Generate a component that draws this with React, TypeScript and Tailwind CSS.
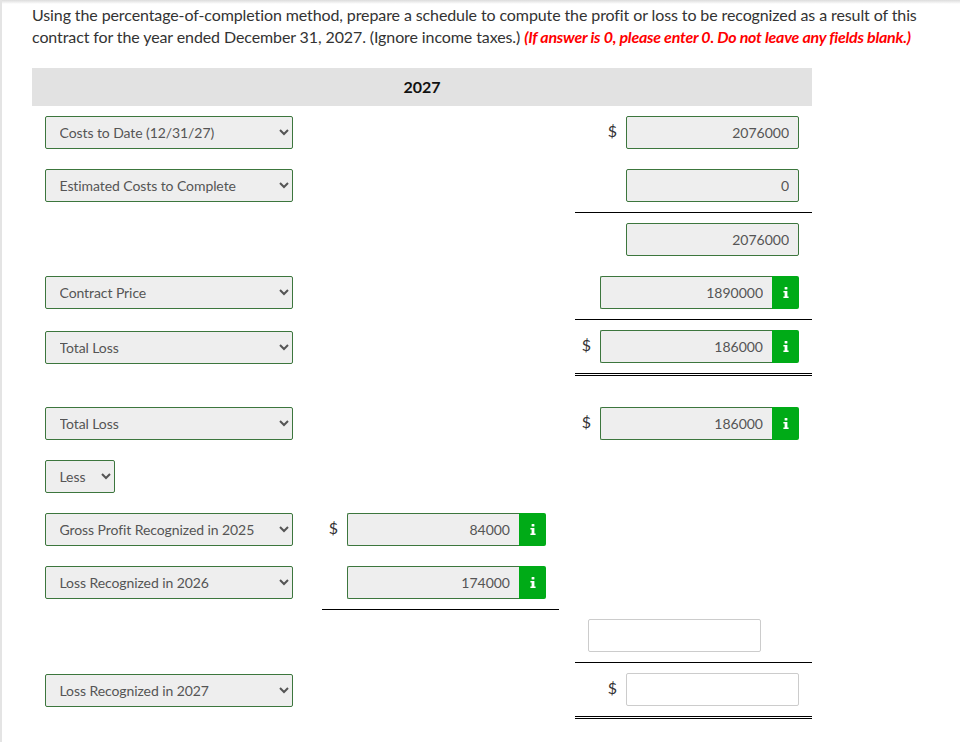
import type { ReactNode } from "react";

function InfoGlyph() {
  return (
    <svg viewBox="0 0 6 11" className="h-[11px] w-[6px]" fill="currentColor" aria-hidden="true">
      <rect x="1.6" y="0" width="2.8" height="2.6" rx="0.5" />
      <path d="M0.4 4h4v5.6H5.6V11H0.4V9.6h1.2V5.4H0.4z" />
    </svg>
  );
}

function Select({ label, width = "w-[248px]" }: { label: string; width?: string }) {
  return (
    <select
      defaultValue={label}
      className={`${width} h-[33px] rounded-[2px] border border-[#3c763d] bg-[#eeeeee] pl-[9.5px] text-[14px] tracking-[-0.08px] text-[#555555]`}
    >
      <option>{label}</option>
    </select>
  );
}

function Amount({
  value,
  dollar,
  info,
  locked = true,
}: {
  value?: string;
  dollar?: boolean;
  info?: boolean;
  locked?: boolean;
}) {
  return (
    <div className="flex items-center justify-end pr-[13px]">
      {dollar && <span className="mr-[9px] -mt-[4px] text-[16px] leading-[22px] text-[#333333]">$</span>}
      <Field value={value} info={info} locked={locked} />
    </div>
  );
}

function Field({ value, info, locked }: { value?: string; info?: boolean; locked?: boolean }) {
  return (
    <div className="flex h-[33px]">
      <input
        readOnly
        value={value ?? ""}
        className={`h-full border px-[9px] text-right text-[14px] text-[#555555] ${
          locked ? "border-[#3c763d] bg-[#eeeeee]" : "border-[#cccccc] bg-white"
        } ${info ? "w-[172px] rounded-l-[2px] border-r-0" : "w-[173px] rounded-[2px]"}`}
      />
      {info && (
        <span className="flex h-full w-[27px] items-center justify-center rounded-r-[2px] bg-[#00ab17] text-white">
          <InfoGlyph />
        </span>
      )}
    </div>
  );
}

function Row({ label, mid, right }: { label?: ReactNode; mid?: ReactNode; right?: ReactNode }) {
  return (
    <div className="grid grid-cols-[274px_237px_237px] gap-x-[16px]">
      <div className="flex h-[53px] items-center pl-[13px]">{label}</div>
      <div className="flex h-[53px] flex-col justify-center">{mid}</div>
      <div className="flex h-[53px] flex-col justify-center">{right}</div>
    </div>
  );
}

export default function App() {
  return (
    <div className="h-[742px] overflow-hidden border-l-2 border-[#e4e4e4] bg-white font-['Lato',sans-serif]">
      <div className="h-[4px] bg-gradient-to-b from-[#dcdcdc] to-white" />
      <div className="pl-[30px] pr-[30px]">
        <p className="text-[16px] leading-[22px] tracking-[-0.105px] text-[#333333]">
          Using the percentage-of-completion method, prepare a schedule to compute the profit or loss to be recognized as a result of this contract for the year ended December 31, 2027. (Ignore income taxes.){" "}
          <strong className="font-bold italic tracking-[-0.24px] text-[#ff0000]">
            (If answer is 0, please enter 0. Do not leave any fields blank.)
          </strong>
        </p>

        <div className="mt-[20px] w-[780px]">
          <div className="flex h-[38px] items-center bg-[#e2e2e2] pl-[290px]">
            <div className="w-[200px] text-center text-[16px] font-bold text-[#111111]">2027</div>
          </div>

          <Row label={<Select label="Costs to Date (12/31/27)" />} right={<Amount value="2076000" dollar />} />
          <Row label={<Select label="Estimated Costs to Complete" />} right={<Amount value="0" />} />
          <div className="ml-[543px] h-[1px] w-[237px] bg-black" />
          <Row right={<Amount value="2076000" />} />
          <Row label={<Select label="Contract Price" />} right={<Amount value="1890000" info />} />
          <div className="ml-[543px] h-[1px] w-[237px] bg-black" />
          <Row
            label={
              <div className="translate-y-px">
                <Select label="Total Loss" />
              </div>
            }
            right={<Amount value="186000" dollar info />}
          />
          <div className="ml-[543px] h-[3px] w-[237px] border-y border-black" />

          <div className="h-[21px]" />
          <Row label={<Select label="Total Loss" />} right={<Amount value="186000" dollar info />} />
          <Row label={<Select label="Less" width="w-[70px]" />} />
          <Row label={<Select label="Gross Profit Recognized in 2025" />} mid={<Amount value="84000" dollar info />} />
          <Row label={<Select label="Loss Recognized in 2026" />} mid={<Amount value="174000" info />} />
          <div className="ml-[290px] h-[1px] w-[237px] bg-black" />
          <div className="h-[52px]">
            <Row
              right={
                <div className="-translate-y-px pl-[13px]">
                  <Field locked={false} />
                </div>
              }
            />
          </div>
          <div className="ml-[543px] h-[1px] w-[237px] bg-black" />
          <Row
            label={
              <div className="translate-y-px">
                <Select label="Loss Recognized in 2027" />
              </div>
            }
            right={<Amount dollar locked={false} />}
          />
          <div className="ml-[543px] h-[3px] w-[237px] border-y border-black" />
        </div>
      </div>
    </div>
  );
}
